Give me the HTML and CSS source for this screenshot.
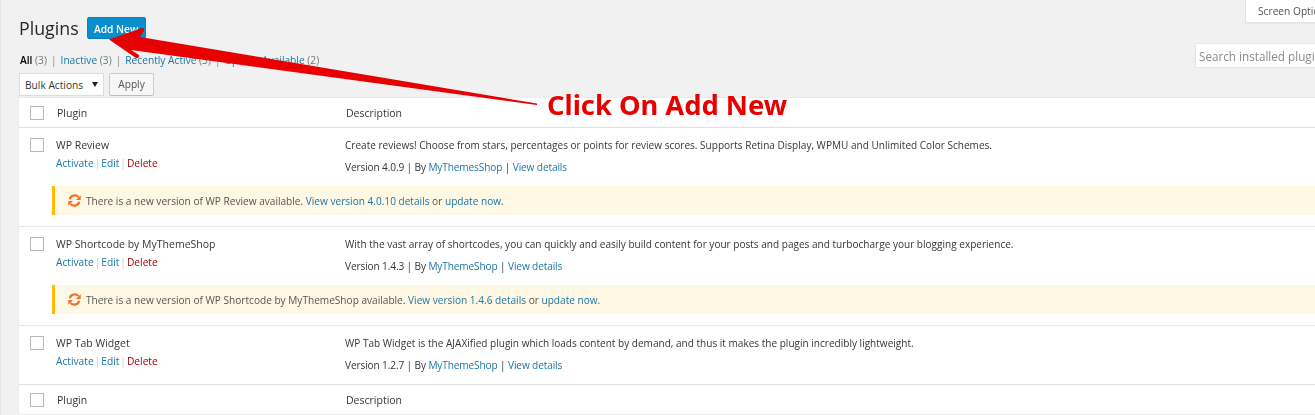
FILE: index.html
```html
<!DOCTYPE html>
<html lang="en">
<head>
<meta charset="utf-8">
<title>Plugins</title>
<link rel="stylesheet" href="styles.css">
</head>
<body>
<div class="page">
  <header class="top">
    <div class="top-left">
      <div class="title-row">
        <h1 class="title">Plugins</h1>
        <a class="add-new">Add New</a>
      </div>
      <div class="filters"><b>All</b> <span class="muted">(3)</span><span class="sep">|</span><a>Inactive</a> <span class="muted">(3)</span><span class="sep">|</span><a>Recently Active</a> <span class="muted">(3)</span><span class="sep">|</span><a>Update Available</a> <span class="muted">(2)</span></div>
      <div class="bulk-row">
        <div class="select">Bulk Actions<span class="caret"></span></div>
        <div class="apply">Apply</div>
      </div>
    </div>
    <div class="top-right">
      <div class="screen-options">Screen Options</div>
      <div class="search">Search installed plugins...</div>
    </div>
  </header>
  <main class="table">
    <div class="row head"><span class="check"></span><span class="head-name">Plugin</span><span class="head-desc">Description</span></div>

    <section class="plugin with-notice">
      <div class="row body">
        <span class="check"></span>
        <div class="name-col"><div class="name">WP Review</div><div class="actions"><a>Activate</a><i>|</i><a>Edit</a><i>|</i><a class="del">Delete</a></div></div>
        <div class="desc-col"><div class="desc">Create reviews! Choose from stars, percentages or points for review scores. Supports Retina Display, WPMU and Unlimited Color Schemes.</div><div class="ver">Version 4.0.9 | By <a>MyThemesShop</a> | <a>View details</a></div></div>
      </div>
      <div class="notice"><svg class="update" viewBox="0 0 16 16"><path d="M3 6.6A5.3 5.3 0 0 1 12.2 4.4" /><path d="M13 9.4A5.3 5.3 0 0 1 3.8 11.6" /><path class="fill" d="M14.6 2.4v5h-5zM1.4 13.6v-5h5z"/></svg>There is a new version of WP Review available. <a>View version 4.0.10 details</a> or <a>update now</a>.</div>
    </section>

    <section class="plugin with-notice">
      <div class="row body">
        <span class="check"></span>
        <div class="name-col"><div class="name">WP Shortcode by MyThemeShop</div><div class="actions"><a>Activate</a><i>|</i><a>Edit</a><i>|</i><a class="del">Delete</a></div></div>
        <div class="desc-col"><div class="desc">With the vast array of shortcodes, you can quickly and easily build content for your posts and pages and turbocharge your blogging experience.</div><div class="ver">Version 1.4.3 | By <a>MyThemeShop</a> | <a>View details</a></div></div>
      </div>
      <div class="notice"><svg class="update" viewBox="0 0 16 16"><path d="M3 6.6A5.3 5.3 0 0 1 12.2 4.4" /><path d="M13 9.4A5.3 5.3 0 0 1 3.8 11.6" /><path class="fill" d="M14.6 2.4v5h-5zM1.4 13.6v-5h5z"/></svg>There is a new version of WP Shortcode by MyThemeShop available. <a>View version 1.4.6 details</a> or <a>update now</a>.</div>
    </section>

    <section class="plugin last">
      <div class="row body">
        <span class="check"></span>
        <div class="name-col"><div class="name">WP Tab Widget</div><div class="actions"><a>Activate</a><i>|</i><a>Edit</a><i>|</i><a class="del">Delete</a></div></div>
        <div class="desc-col"><div class="desc">WP Tab Widget is the AJAXified plugin which loads content by demand, and thus it makes the plugin incredibly lightweight.</div><div class="ver">Version 1.2.7 | By <a>MyThemeShop</a> | <a>View details</a></div></div>
      </div>
    </section>

    <div class="row foot"><span class="check"></span><span class="head-name">Plugin</span><span class="head-desc">Description</span></div>
  </main>

  <svg class="arrow" viewBox="0 0 1315 415" aria-hidden="true"><path d="M109 39.5 L142 28 Q145 28 144 31 L140 37 L537 103.5 L537 105 L131 50 L139 55 Q139 59 136 58 Z"/></svg>
  <div class="callout">Click On Add New</div>
</div>
</body>
</html>
```
FILE: styles.css
```css
* { box-sizing: border-box; }
html, body { margin: 0; padding: 0; }
body { width: 1315px; height: 415px; overflow: hidden; background: #f1f1f1; font-family: "Open Sans", sans-serif; font-size: 10.2px; color: #444; }
a { color: #1a76a5; }
.page { position: relative; height: 415px; overflow: hidden; padding-left: 18px; border-left: 1px solid #e4e8ea; filter: blur(0.5px); }

.top { display: flex; justify-content: space-between; height: 98px; }
.top-left { display: flex; flex-direction: column; }
.title-row { display: flex; align-items: center; gap: 8px; padding-top: 17px; height: 39px; }
.title { margin: 0; font-size: 17.8px; font-weight: 400; color: #23282d; line-height: 22px; }
.add-new { display: block; width: 59px; height: 22px; line-height: 22px; text-align: center; background: #0a8fce; border: 1px solid #0a84bf; border-radius: 2px; color: #fff; font-weight: 600; font-size: 10.2px; }
.filters { margin-top: 15px; padding-left: 1px; line-height: 13px; height: 13px; color: #666; white-space: nowrap; }
.filters b { color: #000; font-weight: 600; }
.muted { color: #72777c; }
.sep { margin: 0 4px; color: #888; }
.bulk-row { display: flex; gap: 5px; margin-top: 6px; }
.select { position: relative; width: 85px; height: 23px; line-height: 22px; padding-left: 5px; background: #fff; border: 1px solid #ddd; color: #32373c; }
.caret { position: absolute; right: 5px; top: 8px; border-left: 3px solid transparent; border-right: 3px solid transparent; border-top: 5px solid #222; }
.apply { width: 45px; height: 23px; line-height: 21px; text-align: center; background: #f7f7f7; border: 1px solid #ccc; border-bottom-color: #bbb; border-radius: 2px; color: #555; }

.top-right { display: flex; flex-direction: column; align-items: flex-end; margin-right: -60px; }
.screen-options { width: 130px; height: 23px; padding-left: 12px; line-height: 22px; background: #fff; border: 1px solid #e2e2e2; border-top: 0; color: #555; font-size: 10.2px; white-space: nowrap; box-shadow: 0 1px 1px rgba(0,0,0,.04); }
.search { width: 180px; height: 25px; margin-top: 20px; padding-left: 3px; line-height: 25px; background: #fff; border: 1px solid #e6e6e6; color: #8a8a8a; font-size: 11.7px; white-space: nowrap; }

.table { background: #fff; height: 316px; box-shadow: 0 0 1px rgba(0,0,0,.15); }
.row { display: grid; grid-template-columns: 37px 289px 1fr; }
.head { height: 30px; align-items: center; padding-top: 1px; border-bottom: 1px solid #e1e1e1; }
.foot { height: 30px; align-items: center; border-top: 1px solid #e1e1e1; }
.check { display: block; width: 14px; height: 14px; margin-left: 11px; background: #fff; border: 1px solid #b4b9be; }
.head-name, .head-desc { padding-left: 1px; color: #32373c; font-size: 10.5px; }

.plugin { border-bottom: 1px solid #e8e8e8; height: 99px; }
.plugin.last { height: 58px; border-bottom: 0; }
.body { padding-top: 9px; height: 58px; }
.body .check { margin-top: 1px; }
.name { padding-top: 1px; line-height: 14px; color: #32373c; font-size: 10.5px; }
.actions { margin-top: 4px; line-height: 14px; font-size: 10.2px; }
.actions i { font-style: normal; margin: 0 1px; color: #ccc; }
.del { color: #a00; }
.desc-col { color: #32373c; }
.desc { padding-top: 1px; line-height: 14px; font-size: 10.05px; }
.ver { margin-top: 8px; line-height: 14px; font-size: 10.1px; letter-spacing: -0.12px; }

.notice { display: flex; align-items: center; height: 29px; margin-left: 33px; padding-left: 12px; background: #fff8e5; border-left: 3px solid #ffb900; white-space: pre; color: #555; font-size: 10.1px; }
.update { flex: none; width: 15px; height: 15px; margin-right: 4px; }
.update path { fill: none; stroke: #f56e28; stroke-width: 2.4; }
.update .fill { fill: #f56e28; stroke: none; }

.arrow { position: absolute; left: -1px; top: 0; width: 1315px; height: 415px; pointer-events: none; }
.arrow path { fill: #e80000; }
.callout { position: absolute; left: 546px; top: 86px; line-height: 38px; font-family: "Noto Sans", sans-serif; font-weight: 700; font-size: 27.3px; color: #e60000; white-space: nowrap; }
```
